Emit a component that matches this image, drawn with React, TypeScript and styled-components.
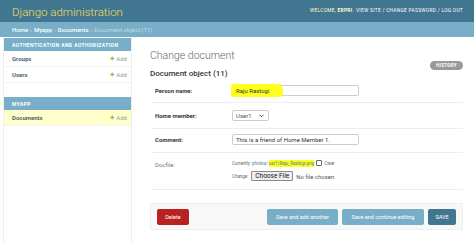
import React from "react";
import styled, { createGlobalStyle } from "styled-components";

const Global = createGlobalStyle`
  html, body { margin: 0; padding: 0; background: #fff; }
  body { width: 474px; height: 242px; overflow: hidden; font-family: Roboto, "Liberation Sans", sans-serif; color: #333; }
  * { box-sizing: border-box; }
`;

const Header = styled.header`
  height: 22px;
  background: #417690;
  display: flex;
  align-items: center;
  justify-content: space-between;
  padding: 0 11px 0 12px;
`;

const Branding = styled.div`
  color: #f5dd5d;
  font-size: 11.5px;
  font-weight: 300;
  margin-top: 1px;
`;

const UserTools = styled.div`
  color: #fff;
  font-size: 4.8px;
  letter-spacing: 0.3px;
  text-transform: uppercase;
  display: flex;
  gap: 2px;
  margin-bottom: 2px;
`;

const Welcome = styled.span`
  color: #ffc;
  strong { font-weight: 700; }
`;

const Crumbs = styled.div`
  height: 15px;
  background: #79aec8;
  display: flex;
  align-items: center;
  padding-left: 12px;
  font-size: 6px;
  color: #c4dce8;
  gap: 2px;
`;

const CrumbLink = styled.span`
  color: #fff;
  font-weight: 500;
`;

const Layout = styled.div`
  display: flex;
  height: 205px;
`;

const Sidebar = styled.nav`
  margin-left: 3px;
  width: 129px;
  border-left: 1px solid #eee;
  border-right: 1px solid #eee;
  padding-top: 1px;
  display: flex;
  flex-direction: column;
`;

const Module = styled.div`
  margin-bottom: 14px;
`;

const Caption = styled.div`
  height: 13px;
  background: #79aec8;
  color: #fff;
  font-size: 5px;
  font-weight: 700;
  letter-spacing: 0.4px;
  text-transform: uppercase;
  display: flex;
  align-items: center;
  padding-left: 8px;
`;

const ModelRow = styled.div<{ $current?: boolean }>`
  height: 16px;
  display: flex;
  align-items: center;
  justify-content: space-between;
  padding: 0 4px 0 8px;
  background: ${(p) => (p.$current ? "#ffffcc" : "#fff")};
  border-bottom: 1px solid #f2f2f2;
  font-size: 6px;
  font-weight: 700;
  color: #4f6570;
`;

const AddLink = styled.span`
  font-size: 6px;
  font-weight: 400;
  color: #999;
  display: flex;
  align-items: center;
  gap: 2px;
`;

const Plus = styled.span`
  color: #70bf2b;
  font-size: 8px;
  font-weight: 700;
  line-height: 6px;
`;

const Content = styled.main`
  flex: 1;
  padding: 13px 10px 0 18px;
  display: flex;
  flex-direction: column;
`;

const Title = styled.h1`
  margin: 0;
  font-size: 10.5px;
  line-height: 12px;
  font-weight: 300;
  color: #666;
`;

const SubRow = styled.div`
  margin-top: 5px;
  height: 12px;
  display: flex;
  justify-content: space-between;
  align-items: center;
`;

const SubTitle = styled.h2`
  margin: 0;
  font-size: 8px;
  font-weight: 500;
  color: #333;
`;

const HistoryBtn = styled.span`
  margin-top: -15px;
  margin-right: 1px;
  width: 33px;
  height: 9px;
  border-radius: 5px;
  background: #999;
  color: #fff;
  font-size: 4.5px;
  font-weight: 700;
  letter-spacing: 0.3px;
  display: flex;
  align-items: center;
  justify-content: center;
`;

const FormRow = styled.div<{ $pt: number; $pb: number }>`
  display: flex;
  align-items: flex-start;
  margin-left: 2px;
  margin-right: 1px;
  padding: ${(p) => p.$pt}px 0 ${(p) => p.$pb}px 3px;
  border-bottom: 1px solid #eee;
`;

const Label = styled.label<{ $optional?: boolean }>`
  width: 77px;
  font-size: 6px;
  line-height: 11px;
  font-weight: ${(p) => (p.$optional ? 400 : 700)};
  color: ${(p) => (p.$optional ? "#777" : "#333")};
`;

const TextBox = styled.div`
  width: 127px;
  height: 11px;
  border: 1px solid #ccc;
  border-radius: 2px;
  display: flex;
  align-items: center;
  padding-left: 3px;
  font-size: 6px;
  color: #333;
`;

const Marker = styled.span`
  background: #ffff1e;
  margin-left: -5px;
  padding: 3px 14px 3px 5px;
  border-radius: 3px 6px 4px 2px;
`;

const SelectBox = styled.div`
  width: 37px;
  height: 11px;
  border: 1px solid #ccc;
  border-radius: 2px;
  display: flex;
  align-items: center;
  justify-content: space-between;
  padding: 0 4px 0 3px;
  font-size: 6px;
  color: #555;
`;

const FileBlock = styled.div`
  display: flex;
  flex-direction: column;
  gap: 5px;
`;

const FileLine = styled.div`
  display: flex;
  align-items: center;
  font-size: 4.5px;
  color: #666;
  height: 8px;
  gap: 1px;
`;

const FileLink = styled.span`
  color: #447e9b;
`;

const Highlight = styled.span`
  background: #ffff1e;
  color: #447e9b;
  padding: 1px 0;
`;

const Check = styled.span`
  width: 6px;
  height: 6px;
  border: 1px solid #666;
  border-radius: 1px;
  margin: 0 1px 0 1px;
  background: #fff;
`;

const ChooseBtn = styled.span`
  height: 10px;
  padding: 0 3px;
  border: 1px solid #8a8a8a;
  border-radius: 1px;
  background: #efefef;
  color: #111;
  font-size: 6.5px;
  display: flex;
  align-items: center;
  margin: 0 2px 0 2px;
`;

const NoFile = styled.span`
  font-size: 6px;
  color: #555;
`;

const SubmitRow = styled.div`
  margin-top: 13px;
  margin-right: 1px;
  background: #f8f8f8;
  border: 1px solid #eee;
  padding: 5px 6px 4px 6px;
  display: flex;
  align-items: center;
  gap: 4px;
`;

const Btn = styled.span<{ $bg: string; $w: number }>`
  width: ${(p) => p.$w}px;
  height: 16px;
  border-radius: 2px;
  background: ${(p) => p.$bg};
  color: #fff;
  font-size: 5.5px;
  display: flex;
  align-items: center;
  justify-content: center;
  white-space: nowrap;
`;

const Spacer = styled.div`
  flex: 1;
`;

const Chevron = () => (
  <svg width="5" height="4" viewBox="0 0 5 4">
    <path d="M0.6 0.8 L2.5 2.8 L4.4 0.8" fill="none" stroke="#333" strokeWidth="0.9" />
  </svg>
);

export default function App() {
  return (
    <>
      <Global />
      <Header>
        <Branding>Django administration</Branding>
        <UserTools>
          <Welcome>
            Welcome, <strong>erpri</strong>.
          </Welcome>
          <span>View site / Change password / Log out</span>
        </UserTools>
      </Header>
      <Crumbs>
        <CrumbLink>Home</CrumbLink>›<CrumbLink>Myapp</CrumbLink>›<CrumbLink>Documents</CrumbLink>›
        <span>Document object (11)</span>
      </Crumbs>
      <Layout>
        <Sidebar>
          <Module>
            <Caption>Authentication and Authorization</Caption>
            <ModelRow>
              Groups
              <AddLink>
                <Plus>+</Plus>Add
              </AddLink>
            </ModelRow>
            <ModelRow>
              Users
              <AddLink>
                <Plus>+</Plus>Add
              </AddLink>
            </ModelRow>
          </Module>
          <Module>
            <Caption>Myapp</Caption>
            <ModelRow $current>
              Documents
              <AddLink>
                <Plus>+</Plus>Add
              </AddLink>
            </ModelRow>
          </Module>
        </Sidebar>
        <Content>
          <Title>Change document</Title>
          <SubRow>
            <SubTitle>Document object (11)</SubTitle>
            <HistoryBtn>HISTORY</HistoryBtn>
          </SubRow>
          <FormRow $pt={6} $pb={6}>
            <Label>Person name:</Label>
            <TextBox>
              <Marker>Raju Rastogi</Marker>
            </TextBox>
          </FormRow>
          <FormRow $pt={7} $pb={7}>
            <Label>Home member:</Label>
            <SelectBox>
              User1
              <Chevron />
            </SelectBox>
          </FormRow>
          <FormRow $pt={5} $pb={7}>
            <Label>Comment:</Label>
            <TextBox>This is a friend of Home Member 1.</TextBox>
          </FormRow>
          <FormRow $pt={6} $pb={9}>
            <Label $optional>Docfile:</Label>
            <FileBlock>
              <FileLine>
                Currently: <FileLink>photos/</FileLink>
                <Highlight>usr1/Raju_Rastogi.png</Highlight>
                <Check />
                Clear
              </FileLine>
              <FileLine>
                Change:
                <ChooseBtn>Choose File</ChooseBtn>
                <NoFile>No file chosen</NoFile>
              </FileLine>
            </FileBlock>
          </FormRow>
          <SubmitRow>
            <Btn $bg="#ba2121" $w={32}>Delete</Btn>
            <Spacer />
            <Btn $bg="#79aec8" $w={71}>Save and add another</Btn>
            <Btn $bg="#79aec8" $w={82}>Save and continue editing</Btn>
            <Btn $bg="#417690" $w={28}>SAVE</Btn>
          </SubmitRow>
        </Content>
      </Layout>
    </>
  );
}
